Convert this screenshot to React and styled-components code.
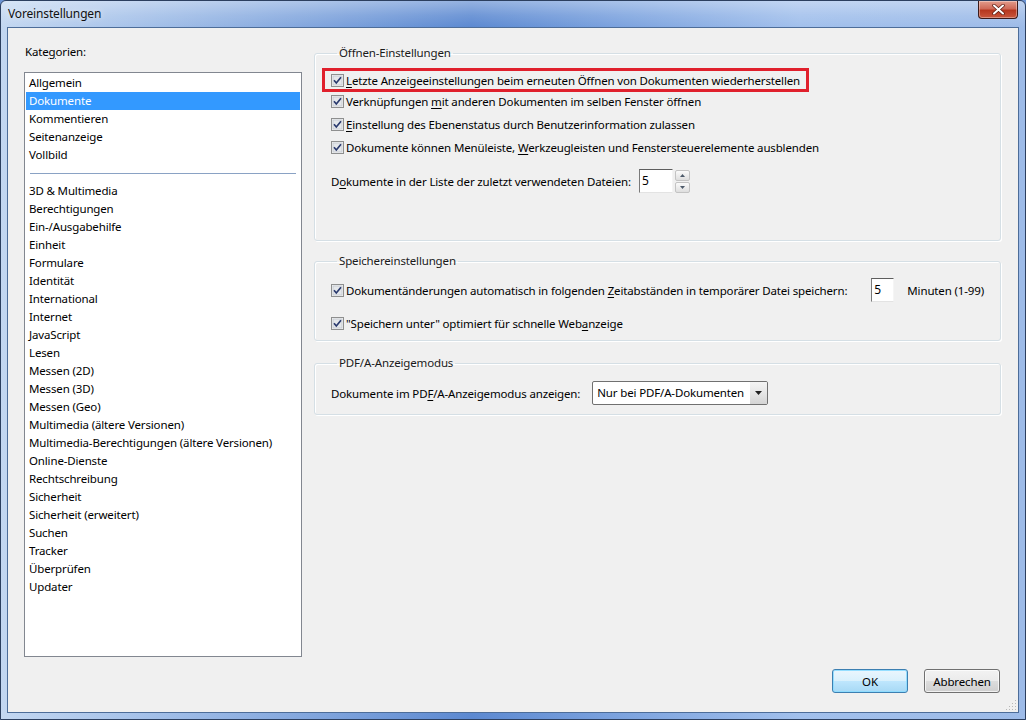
import React from 'react'
import styled, { createGlobalStyle } from 'styled-components'

const GlobalStyle = createGlobalStyle`
  html, body { margin: 0; padding: 0; }
  body {
    font-family: "Noto Sans", "Open Sans", sans-serif;
    font-size: 11.5px;
    letter-spacing: -0.15px;
    color: #000;
    background: #6b93d3;
  }
  * { box-sizing: border-box; }
`;

const Window = styled.div`
  width: 1026px;
  height: 720px;
  display: flex;
  flex-direction: column;
  border: 1px solid #2c3f5f;
  border-radius: 6px 6px 0 0;
  background: linear-gradient(90deg, #c3d7f1 0%, #a9c4ea 12%, #7ea3dc 32%, #5c89d1 46%, #7ba2de 60%, #a2c0ec 78%, #9dbbe8 100%);
  overflow: hidden;
`;

const TitleBar = styled.div`
  height: 26px;
  flex: none;
  display: flex;
  align-items: flex-start;
  justify-content: space-between;
  background: linear-gradient(180deg, rgba(255,255,255,0.35) 0%, rgba(255,255,255,0.12) 55%, rgba(255,255,255,0) 100%);
`;

const Title = styled.div`
  padding: 5px 0 0 7px;
  line-height: 16px;
  font-size: 12px;
  color: #111;
  text-shadow: 0 0 6px rgba(255,255,255,0.8);
`;

const CloseButton = styled.div`
  width: 40px;
  height: 18px;
  margin-right: 7px;
  border: 1px solid #3b1a1a;
  border-top: none;
  border-radius: 0 0 4px 4px;
  background: linear-gradient(180deg, #e39c8c 0%, #cf6a58 45%, #b6371f 55%, #c9573d 100%);
  box-shadow: inset 0 0 0 1px rgba(255,255,255,0.35);
  display: flex;
  align-items: center;
  justify-content: center;
`;

const Client = styled.div`
  flex: 1;
  margin: 0 6px 6px 6px;
  border: 1px solid #4d6d99;
  background: #f0f0f0;
  display: flex;
  flex-direction: column;
  position: relative;
`;

const Main = styled.div`
  flex: 1;
  display: flex;
  gap: 12px;
  padding: 16px 17px 0 16px;
`;

const LeftCol = styled.div`
  flex: none;
  width: 278px;
  display: flex;
  flex-direction: column;
  gap: 12px;
`;

const Label = styled.div`
  line-height: 16px;
  padding-left: 1px;
  white-space: nowrap;
`;

const Key = styled.span`
  text-decoration: underline;
  text-underline-offset: 2px;
`;

const ListBox = styled.div`
  height: 585px;
  background: #fff;
  border: 1px solid #828790;
  padding-top: 1px;
`;

const ListItem = styled.div`
  height: 18px;
  line-height: 18px;
  margin: 0 1px;
  padding-left: 3px;
  white-space: nowrap;
  background: ${p => (p.$selected ? '#3399ff' : 'transparent')};
  color: ${p => (p.$selected ? '#fff' : '#000')};
`;

const ListSeparator = styled.div`
  height: 18px;
  display: flex;
  align-items: center;
  padding: 0 5px;
  &::after {
    content: '';
    flex: 1;
    height: 1px;
    background: #8aa2c4;
  }
`;

const RightCol = styled.div`
  flex: 1;
  min-width: 0;
  display: flex;
  flex-direction: column;
`;

const Group = styled.fieldset`
  margin: ${p => p.$top}px 0 0 0;
  padding: ${p => p.$pad};
  border: 1px solid #d5dfe5;
  border-radius: 3px;
  box-shadow: inset 1px 1px 0 #fff, 1px 1px 0 #fff;
  min-width: 0;
`;

const Legend = styled.legend`
  margin-left: 6px;
  padding: 0 2px;
  line-height: 16px;
  color: #1a1a1a;
`;

const Rows = styled.div`
  display: flex;
  flex-direction: column;
  align-items: flex-start;
`;

const Row = styled.div`
  height: ${p => (p.$h || 23)}px;
  display: flex;
  align-items: center;
  white-space: nowrap;
  margin-top: ${p => p.$mt || 0}px;
`;

const HighlightRow = styled(Row)`
  height: 24px;
  margin-left: -9px;
  margin-bottom: -2px;
  padding: 0 6px;
  border: 3px solid #e0202c;
`;

const CheckText = styled.span`
  margin-left: 2px;
`;

const TextBox = styled.div`
  width: ${p => p.$w}px;
  height: 24px;
  margin-left: ${p => p.$ml}px;
  background: #fff;
  border-top: 1px solid #5e5e5e;
  border-left: 1px solid #7a7a7a;
  border-bottom: 1px solid #e3e3e3;
  border-right: 1px solid #f5f5f5;
  padding: 1px 0 0 2px;
  line-height: 20px;
  font-size: 12px;
`;

const Spin = styled.div`
  margin-left: 2px;
  display: flex;
  flex-direction: column;
  gap: 1px;
`;

const SpinButton = styled.div`
  width: 15px;
  height: 11px;
  border: 1px solid #c3c3c3;
  border-radius: 2px;
  background: linear-gradient(180deg, #fbfbfb 0%, #ececec 50%, #dedede 100%);
  display: flex;
  align-items: center;
  justify-content: center;
`;

const After = styled.span`
  margin-left: 13px;
`;

const Select = styled.div`
  width: 176px;
  height: 24px;
  margin-left: 12px;
  display: flex;
  border: 1px solid #707070;
  border-radius: 2px;
  background: #fff;
  overflow: hidden;
`;

const SelectValue = styled.div`
  flex: 1;
  padding-left: 4px;
  line-height: 22px;
  white-space: nowrap;
  overflow: hidden;
`;

const SelectArrow = styled.div`
  flex: none;
  width: 17px;
  background: linear-gradient(180deg, #f4f4f4 0%, #e6e6e6 50%, #d4d4d4 100%);
  display: flex;
  align-items: center;
  justify-content: center;
`;

const Footer = styled.div`
  display: flex;
  justify-content: flex-end;
  gap: 16px;
  padding: 12px 18px 19px 0;
`;

const Button = styled.div`
  width: 76px;
  height: 24px;
  display: flex;
  align-items: center;
  justify-content: center;
  border-radius: 3px;
  border: 1px solid ${p => (p.$default ? '#3c7fb1' : '#707070')};
  background: ${p => (p.$default
    ? 'linear-gradient(180deg, #eaf6fd 0%, #d9f0fc 50%, #bee6fd 51%, #a7d9f5 100%)'
    : 'linear-gradient(180deg, #f2f2f2 0%, #ebebeb 50%, #dddddd 51%, #cfcfcf 100%)')};
  box-shadow: inset 0 0 0 1px ${p => (p.$default ? 'rgba(140,220,255,0.9)' : 'rgba(255,255,255,0.7)')};
`;

const Grip = styled.div`
  position: absolute;
  right: 2px;
  bottom: 2px;
  width: 11px;
  height: 11px;
  background-image: radial-gradient(circle, #b8b8b8 0.8px, transparent 1px);
  background-size: 3px 3px;
  clip-path: polygon(100% 0, 100% 100%, 0 100%);
`;

const CheckBox = () => (
  <svg width="13" height="13" viewBox="0 0 13 13" style={{ flex: 'none' }}>
    <rect x="0.5" y="0.5" width="12" height="12" fill="#f4f4f4" stroke="#8e8f8f" />
    <rect x="2" y="2" width="9" height="9" fill="#e4e7ea" stroke="#c2c8cf" strokeWidth="0.8" />
    <path d="M3 6.3 L5.3 9 L10 3.3" fill="none" stroke="#2a3a6e" strokeWidth="1.7" />
  </svg>
);

const Arrow = ({ up, size = 5, color = '#4d5a6a' }) => (
  <svg width={size * 2 - 1} height={size} viewBox="0 0 9 5">
    <path d={up ? 'M0 5 L4.5 0 L9 5 Z' : 'M0 0 L9 0 L4.5 5 Z'} fill={color} />
  </svg>
);

const topCats = ['Allgemein', 'Dokumente', 'Kommentieren', 'Seitenanzeige', 'Vollbild'];
const moreCats = [
  '3D & Multimedia', 'Berechtigungen', 'Ein-/Ausgabehilfe', 'Einheit', 'Formulare', 'Identität',
  'International', 'Internet', 'JavaScript', 'Lesen', 'Messen (2D)', 'Messen (3D)', 'Messen (Geo)',
  'Multimedia (ältere Versionen)', 'Multimedia-Berechtigungen (ältere Versionen)', 'Online-Dienste',
  'Rechtschreibung', 'Sicherheit', 'Sicherheit (erweitert)', 'Suchen', 'Tracker', 'Überprüfen', 'Updater',
];

export default function App() {
  return (
    <>
      <GlobalStyle />
      <Window>
        <TitleBar>
          <Title>Voreinstellungen</Title>
          <CloseButton>
            <svg width="13" height="11" viewBox="0 0 13 11">
              <path d="M2 1.5 L11 9.5 M11 1.5 L2 9.5" stroke="#5a1a10" strokeWidth="3.4" strokeLinecap="round" />
              <path d="M2 1.5 L11 9.5 M11 1.5 L2 9.5" stroke="#fff" strokeWidth="2" strokeLinecap="round" />
            </svg>
          </CloseButton>
        </TitleBar>
        <Client>
          <Main>
            <LeftCol>
              <Label>Kate<Key>g</Key>orien:</Label>
              <ListBox>
                {topCats.map(c => (
                  <ListItem key={c} $selected={c === 'Dokumente'}>{c}</ListItem>
                ))}
                <ListSeparator />
                {moreCats.map(c => (
                  <ListItem key={c}>{c}</ListItem>
                ))}
              </ListBox>
            </LeftCol>
            <RightCol>
              <Group $top={1} $pad="0 0 47px 16px">
                <Legend>Öffnen-Einstellungen</Legend>
                <Rows>
                  <Row $h={7} />
                  <HighlightRow>
                    <CheckBox />
                    <CheckText><Key>L</Key>etzte Anzeigeeinstellungen beim erneuten Öffnen von Dokumenten wiederherstellen</CheckText>
                  </HighlightRow>
                  <Row>
                    <CheckBox />
                    <CheckText>Verknüpfungen <Key>m</Key>it anderen Dokumenten im selben Fenster öffnen</CheckText>
                  </Row>
                  <Row>
                    <CheckBox />
                    <CheckText><Key>E</Key>instellung des Ebenenstatus durch Benutzerinformation zulassen</CheckText>
                  </Row>
                  <Row>
                    <CheckBox />
                    <CheckText>Dokumente können Menüleiste, <Key>W</Key>erkzeugleisten und Fenstersteuerelemente ausblenden</CheckText>
                  </Row>
                  <Row $h={24} $mt={10}>
                    <span>D<Key>o</Key>kumente in der Liste der zuletzt verwendeten Dateien:</span>
                    <TextBox $w={34} $ml={8}>5</TextBox>
                    <Spin>
                      <SpinButton><Arrow up size={3} /></SpinButton>
                      <SpinButton><Arrow size={3} /></SpinButton>
                    </Spin>
                  </Row>
                </Rows>
              </Group>

              <Group $top={12} $pad="9px 0 5px 16px">
                <Legend>Speichereinstellungen</Legend>
                <Rows>
                  <Row $h={24}>
                    <CheckBox />
                    <CheckText>Dokumentänderungen automatisch in folgenden <Key>Z</Key>eitabständen in temporärer Datei speichern:</CheckText>
                    <TextBox $w={23} $ml={24}>5</TextBox>
                    <After>Minuten (1-99)</After>
                  </Row>
                  <Row $mt={10}>
                    <CheckBox />
                    <CheckText>"Speichern unter" optimiert für schnelle Web<Key>a</Key>nzeige</CheckText>
                  </Row>
                </Rows>
              </Group>

              <Group $top={14} $pad="10px 0 9px 16px">
                <Legend>PDF/A-Anzeigemodus</Legend>
                <Rows>
                  <Row $h={24}>
                    <span>Dokumente im PD<Key>F</Key>/A-Anzeigemodus anzeigen:</span>
                    <Select>
                      <SelectValue>Nur bei PDF/A-Dokumenten</SelectValue>
                      <SelectArrow><Arrow size={4} color="#222" /></SelectArrow>
                    </Select>
                  </Row>
                </Rows>
              </Group>
            </RightCol>
          </Main>
          <Footer>
            <Button $default>OK</Button>
            <Button>Abbrechen</Button>
          </Footer>
          <Grip />
        </Client>
      </Window>
    </>
  )
}
